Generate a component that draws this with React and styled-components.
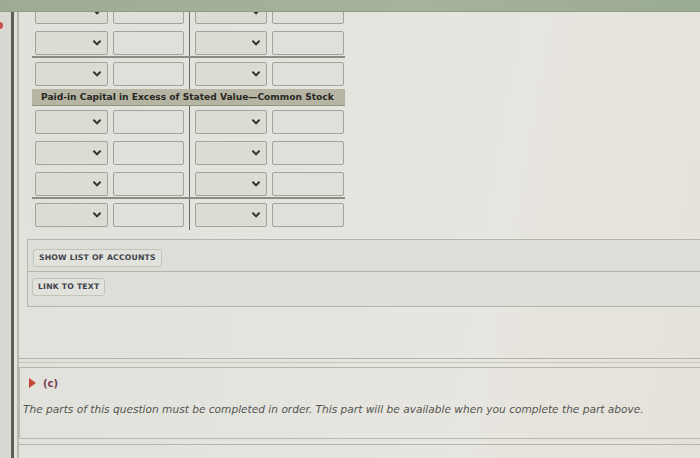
import React from "react";
import styled, { createGlobalStyle } from "styled-components";

const GlobalStyle = createGlobalStyle`
  html, body {
    margin: 0;
    padding: 0;
    height: 100%;
  }
  body {
    font-family: "DejaVu Sans", Verdana, sans-serif;
    background: linear-gradient(100deg, #dfe1da 0%, #e4e4df 40%, #e7e5df 70%, #e5e2da 100%);
    overflow: hidden;
  }
`;

const Page = styled.div`
  width: 700px;
  height: 458px;
  display: flex;
  flex-direction: column;
  overflow: hidden;
`;

const TopBar = styled.div`
  height: 11px;
  flex-shrink: 0;
  background: linear-gradient(90deg, #9eab95, #a5b29c 60%, #9cab94);
  border-bottom: 1px solid #8f9c88;
`;

const Body = styled.div`
  flex: 1;
  display: flex;
  overflow: hidden;
`;

const Gutter = styled.div`
  width: 11px;
  flex-shrink: 0;
  background: #d9d9d3;
  border-right: 3px solid #5e5e57;
  overflow: hidden;
`;

const RedMark = styled.span`
  display: block;
  width: 3px;
  height: 7px;
  margin-top: 10px;
  border-radius: 0 3px 3px 0;
  background: #d0514c;
`;

const Rail = styled.div`
  width: 3px;
  flex-shrink: 0;
  border-right: 2px solid #b9b9b0;
`;

const Main = styled.div`
  flex: 1;
  display: flex;
  flex-direction: column;
`;

const Table = styled.div`
  width: 313px;
  margin: -16px 0 0 13px;
`;

const Row = styled.div`
  display: grid;
  grid-template-columns: 73px 71px 1px 72px 72px;
  column-gap: 5px;
  padding-left: 3px;
  border-bottom: ${(p) => (p.$sep ? "2px solid #8c8c84" : "none")};
`;

const Cell = styled.div`
  height: 24px;
  margin: 4px 0 ${(p) => (p.$sep ? "1px" : "3px")};
  box-sizing: border-box;
  border: 1px solid #a3a39b;
  border-radius: 2px;
  background: ${(p) => (p.$select ? "#dcdcd5" : "#e0e0da")};
  display: flex;
  align-items: center;
  justify-content: flex-end;
  padding-right: 6px;
`;

const Divider = styled.div`
  background: #6a6a64;
`;

const Header = styled.div`
  height: 16px;
  background: #b6b4a2;
  border-bottom: 1px solid #939180;
  padding-left: 9px;
  font-size: 9.1px;
  font-weight: bold;
  line-height: 16px;
  color: #262622;
  white-space: nowrap;
`;

const Chevron = () => (
  <svg width="8" height="6" viewBox="0 0 8 6">
    <polyline
      points="1,1.2 4,4.4 7,1.2"
      fill="none"
      stroke="#34332f"
      strokeWidth="2"
      strokeLinecap="round"
      strokeLinejoin="round"
    />
  </svg>
);

const Panel = styled.div`
  margin: 9px 0 0 8px;
  border: 1px solid #b3b4aa;
  border-right: none;
  background: #dcdfd7;
`;

const Band = styled.div`
  display: flex;
  align-items: flex-start;
  padding: ${(p) => (p.$first ? "9px 5px 4px" : "6px 4px 10px")};
  border-top: ${(p) => (p.$first ? "none" : "1px solid #b1b2a8")};
`;

const Button = styled.div`
  height: 18px;
  box-sizing: border-box;
  padding: 0 5px;
  border: 1px solid #c2c3b9;
  border-radius: 3px;
  background: #e1e2db;
  font-size: 7.7px;
  font-weight: bold;
  line-height: 16px;
  letter-spacing: 0.2px;
  color: #3d3f4a;
  white-space: nowrap;
`;

const DoubleRule = styled.div`
  margin-top: 51px;
  height: 3px;
  border-top: 1px solid #b4b4aa;
  border-bottom: 1px solid #c4c4ba;
`;

const Section = styled.div`
  margin-top: 4px;
  border: 1px solid #b7b8ae;
  border-right: none;
  padding: 9px 0 19px 8px;
  height: 42px;
`;

const PartHead = styled.div`
  display: flex;
  align-items: center;
  gap: 7px;
  height: 12px;
  padding-left: 1px;
`;

const Triangle = styled.span`
  width: 0;
  height: 0;
  border-top: 5px solid transparent;
  border-bottom: 5px solid transparent;
  border-left: 7px solid #c8443a;
`;

const PartLabel = styled.span`
  font-size: 10px;
  font-weight: bold;
  color: #7a3c4e;
`;

const Note = styled.p`
  margin: 14px 0 0 -5px;
  font-size: 10.6px;
  font-style: italic;
  color: #55554f;
  white-space: nowrap;
`;

const BottomRule = styled.div`
  margin-top: 5px;
  border-top: 1px solid #b4b4aa;
`;

const TableRow = ({ sep }) => (
  <Row $sep={sep}>
    <Cell $select $sep={sep}>
      <Chevron />
    </Cell>
    <Cell $sep={sep} />
    <Divider />
    <Cell $select $sep={sep}>
      <Chevron />
    </Cell>
    <Cell $sep={sep} />
  </Row>
);

export default function App() {
  return (
    <Page>
      <GlobalStyle />
      <TopBar />
      <Body>
        <Gutter>
          <RedMark />
        </Gutter>
        <Rail />
        <Main>
          <Table>
            <TableRow />
            <TableRow sep />
            <TableRow />
            <Header>Paid-in Capital in Excess of Stated Value—Common Stock</Header>
            <TableRow />
            <TableRow />
            <TableRow sep />
            <TableRow />
          </Table>
          <Panel>
            <Band $first>
              <Button>SHOW LIST OF ACCOUNTS</Button>
            </Band>
            <Band>
              <Button>LINK TO TEXT</Button>
            </Band>
          </Panel>
          <DoubleRule />
          <Section>
            <PartHead>
              <Triangle />
              <PartLabel>(c)</PartLabel>
            </PartHead>
            <Note>
              The parts of this question must be completed in order. This part will be available when you complete the part above.
            </Note>
          </Section>
          <BottomRule />
        </Main>
      </Body>
    </Page>
  );
}
